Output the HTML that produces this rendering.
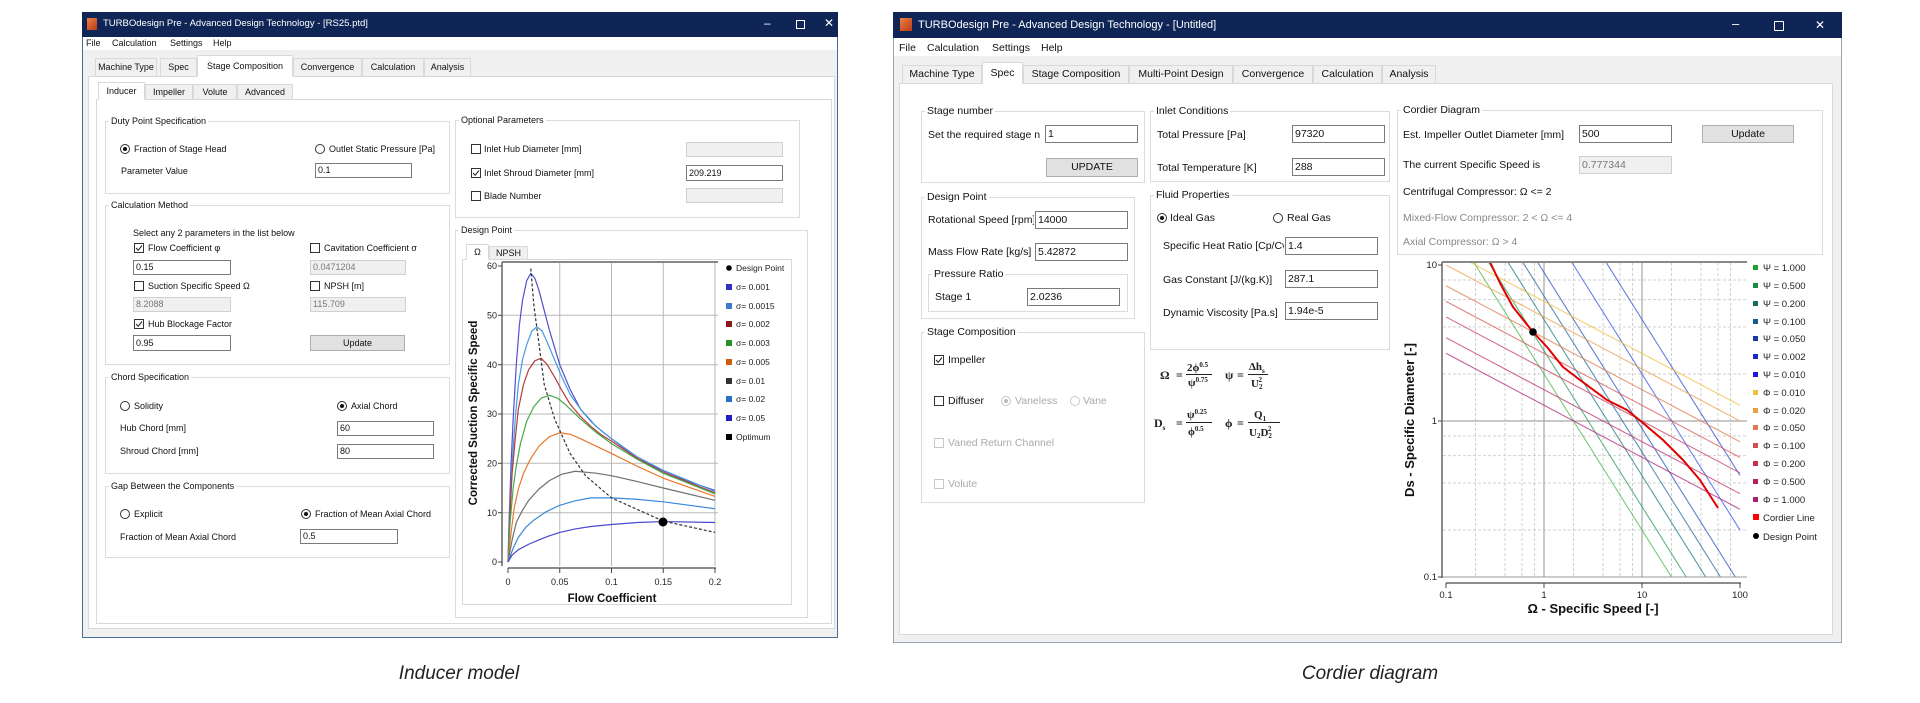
<!DOCTYPE html>
<html><head><meta charset="utf-8">
<style>
*{margin:0;padding:0}
body{width:1920px;height:703px;background:#fff;position:relative;overflow:hidden;font-family:"Liberation Sans",sans-serif}
.a{position:absolute}
.t{position:absolute;white-space:nowrap;line-height:12px;height:12px}
.L{font-size:9px;color:#111}
.R{font-size:10.5px;color:#111}
.in{position:absolute;background:#fff;border:1px solid #7a7a7a;box-sizing:border-box;padding-left:2px;white-space:nowrap;overflow:hidden}
.dis{background:#f0f0f0;border-color:#d0d0d0;color:#777}
.btn{position:absolute;background:#e1e1e1;border:1px solid #adadad;box-sizing:border-box;text-align:center;white-space:nowrap}
.gb{position:absolute;border:1px solid #dcdcdc;box-sizing:border-box}
.gt{position:absolute;background:#fff;padding:0 2px;white-space:nowrap;line-height:12px}
.cb{position:absolute;width:10px;height:10px;border:1px solid #333;box-sizing:border-box;background:#fff}
.cb.g{border-color:#c8c8c8}
.rb{position:absolute;width:10px;height:10px;border:1px solid #333;border-radius:50%;box-sizing:border-box;background:#fff}
.rb.on::after{content:"";position:absolute;left:2px;top:2px;width:4px;height:4px;border-radius:50%;background:#111}
.rb.g{border-color:#c8c8c8}.rb.g.on::after{background:#bbb}
.tab{position:absolute;background:#f0f0f0;border:1px solid #d9d9d9;box-sizing:border-box;text-align:center;white-space:nowrap}
.tab.s{background:#fff;border-bottom-color:#fff;z-index:2}
.title{position:absolute;background:#0e2556;color:#fff;white-space:nowrap}
.gray{color:#8a8a8a}
</style></head><body>

<!-- ================= LEFT WINDOW ================= -->
<div class="a" style="left:82px;top:12px;width:756px;height:626px;background:#f0f0f0;border:1px solid #4a6a9a;box-sizing:border-box"></div>
<div class="title" style="left:82px;top:12px;width:756px;height:25px"></div>
<div class="a" style="left:87px;top:18px;width:10px;height:12px;background:linear-gradient(135deg,#f08040,#b83a18)"></div>
<div class="t" style="left:103px;top:18px;color:#fff;font-size:9.5px">TURBOdesign Pre - Advanced Design Technology - [RS25.ptd]</div>
<div class="t" style="left:764px;top:17px;color:#fff;font-size:12px">&#8211;</div>
<div class="a" style="left:796px;top:20px;width:7px;height:7px;border:1px solid #fff"></div>
<div class="t" style="left:824px;top:17px;color:#fff;font-size:12px">&#10005;</div>
<div class="a" style="left:83px;top:37px;width:754px;height:13px;background:#fff"></div>
<div class="t L" style="left:86px;top:37px">File</div>
<div class="t L" style="left:112px;top:37px">Calculation</div>
<div class="t L" style="left:170px;top:37px">Settings</div>
<div class="t L" style="left:213px;top:37px">Help</div>
<!-- tabs -->
<div class="a" style="left:88px;top:76px;width:747px;height:553px;background:#fff;border:1px solid #d9d9d9;box-sizing:border-box"></div>
<div class="tab L" style="left:95px;top:58px;width:62px;height:19px;line-height:17px">Machine Type</div>
<div class="tab L" style="left:160px;top:58px;width:37px;height:19px;line-height:17px">Spec</div>
<div class="tab L s" style="left:197px;top:55px;width:96px;height:22px;line-height:20px">Stage Composition</div>
<div class="tab L" style="left:293px;top:58px;width:69px;height:19px;line-height:17px">Convergence</div>
<div class="tab L" style="left:362px;top:58px;width:62px;height:19px;line-height:17px">Calculation</div>
<div class="tab L" style="left:424px;top:58px;width:47px;height:19px;line-height:17px">Analysis</div>
<!-- subtabs -->
<div class="a" style="left:96px;top:99px;width:736px;height:525px;background:#fff;border:1px solid #d9d9d9;box-sizing:border-box"></div>
<div class="tab L s" style="left:98px;top:82px;width:47px;height:18px;line-height:17px">Inducer</div>
<div class="tab L" style="left:145px;top:84px;width:48px;height:16px;line-height:15px">Impeller</div>
<div class="tab L" style="left:193px;top:84px;width:44px;height:16px;line-height:15px">Volute</div>
<div class="tab L" style="left:237px;top:84px;width:56px;height:16px;line-height:15px">Advanced</div>

<!-- Duty Point -->
<div class="gb" style="left:105px;top:121px;width:345px;height:73px"></div>
<div class="gt L" style="left:109px;top:115px">Duty Point Specification</div>
<div class="rb on" style="left:120px;top:144px"></div><div class="t L" style="left:134px;top:143px">Fraction of Stage Head</div>
<div class="rb" style="left:315px;top:144px"></div><div class="t L" style="left:329px;top:143px">Outlet Static Pressure [Pa]</div>
<div class="t L" style="left:121px;top:165px">Parameter Value</div>
<div class="in L" style="left:315px;top:163px;width:97px;height:15px;line-height:13px">0.1</div>

<!-- Calculation Method -->
<div class="gb" style="left:105px;top:205px;width:345px;height:160px"></div>
<div class="gt L" style="left:109px;top:199px">Calculation Method</div>
<div class="t L" style="left:133px;top:227px">Select any 2 parameters in the list below</div>
<div class="cb" style="left:134px;top:243px"><svg width="8" height="8" style="position:absolute;left:0;top:0"><path d="M1 4 L3.2 6.2 L7 1.5" stroke="#222" stroke-width="1" fill="none"/></svg></div>
<div class="t L" style="left:148px;top:242px">Flow Coefficient &#966;</div>
<div class="cb" style="left:310px;top:243px"></div><div class="t L" style="left:324px;top:242px">Cavitation Coefficient &#963;</div>
<div class="in L" style="left:133px;top:260px;width:98px;height:15px;line-height:13px">0.15</div>
<div class="in L dis" style="left:310px;top:260px;width:96px;height:15px;line-height:13px">0.0471204</div>
<div class="cb" style="left:134px;top:281px"></div><div class="t L" style="left:148px;top:280px">Suction Specific Speed &#937;</div>
<div class="cb" style="left:310px;top:281px"></div><div class="t L" style="left:324px;top:280px">NPSH [m]</div>
<div class="in L dis" style="left:133px;top:297px;width:98px;height:15px;line-height:13px">8.2088</div>
<div class="in L dis" style="left:310px;top:297px;width:96px;height:15px;line-height:13px">115.709</div>
<div class="cb" style="left:134px;top:319px"><svg width="8" height="8" style="position:absolute;left:0;top:0"><path d="M1 4 L3.2 6.2 L7 1.5" stroke="#222" stroke-width="1" fill="none"/></svg></div>
<div class="t L" style="left:148px;top:318px">Hub Blockage Factor</div>
<div class="in L" style="left:133px;top:335px;width:98px;height:16px;line-height:14px">0.95</div>
<div class="btn L" style="left:310px;top:335px;width:95px;height:16px;line-height:14px">Update</div>

<!-- Chord -->
<div class="gb" style="left:105px;top:377px;width:345px;height:97px"></div>
<div class="gt L" style="left:109px;top:371px">Chord Specification</div>
<div class="rb" style="left:120px;top:401px"></div><div class="t L" style="left:134px;top:400px">Solidity</div>
<div class="rb on" style="left:337px;top:401px"></div><div class="t L" style="left:351px;top:400px">Axial Chord</div>
<div class="t L" style="left:120px;top:422px">Hub Chord [mm]</div>
<div class="in L" style="left:337px;top:421px;width:97px;height:15px;line-height:13px">60</div>
<div class="t L" style="left:120px;top:445px">Shroud Chord [mm]</div>
<div class="in L" style="left:337px;top:444px;width:97px;height:15px;line-height:13px">80</div>

<!-- Gap -->
<div class="gb" style="left:105px;top:486px;width:345px;height:72px"></div>
<div class="gt L" style="left:109px;top:480px">Gap Between the Components</div>
<div class="rb" style="left:120px;top:509px"></div><div class="t L" style="left:134px;top:508px">Explicit</div>
<div class="rb on" style="left:301px;top:509px"></div><div class="t L" style="left:315px;top:508px">Fraction of Mean Axial Chord</div>
<div class="t L" style="left:120px;top:531px">Fraction of Mean Axial Chord</div>
<div class="in L" style="left:300px;top:529px;width:98px;height:15px;line-height:13px">0.5</div>

<!-- Optional Parameters -->
<div class="gb" style="left:455px;top:120px;width:345px;height:98px"></div>
<div class="gt L" style="left:459px;top:114px">Optional Parameters</div>
<div class="cb" style="left:471px;top:144px"></div><div class="t L" style="left:484px;top:143px">Inlet Hub Diameter [mm]</div>
<div class="in L dis" style="left:686px;top:142px;width:97px;height:15px"></div>
<div class="cb" style="left:471px;top:168px"><svg width="8" height="8" style="position:absolute;left:0;top:0"><path d="M1 4 L3.2 6.2 L7 1.5" stroke="#222" stroke-width="1" fill="none"/></svg></div>
<div class="t L" style="left:484px;top:167px">Inlet Shroud Diameter [mm]</div>
<div class="in L" style="left:686px;top:165px;width:97px;height:16px;line-height:14px">209.219</div>
<div class="cb" style="left:471px;top:191px"></div><div class="t L" style="left:484px;top:190px">Blade Number</div>
<div class="in L dis" style="left:686px;top:188px;width:97px;height:15px"></div>

<!-- Design Point chart -->
<div class="gb" style="left:455px;top:230px;width:353px;height:388px"></div>
<div class="gt L" style="left:459px;top:224px">Design Point</div>
<div class="a" style="left:462px;top:259px;width:330px;height:346px;border:1px solid #d9d9d9;box-sizing:border-box;background:#fff"></div>
<div class="tab L s" style="left:466px;top:244px;width:23px;height:16px;line-height:15px">&#937;</div>
<div class="tab L" style="left:489px;top:246px;width:39px;height:14px;line-height:13px">NPSH</div>

<svg class="a" style="left:0;top:0" width="1920" height="703" viewBox="0 0 1920 703">
 <g stroke="#b8b8b8" stroke-width="1">
  <line x1="559.75" y1="262" x2="559.75" y2="566"/><line x1="611.5" y1="262" x2="611.5" y2="566"/>
  <line x1="663.25" y1="262" x2="663.25" y2="566"/><line x1="715" y1="262" x2="715" y2="566"/>
  <line x1="502" y1="512.7" x2="718" y2="512.7"/><line x1="502" y1="463.3" x2="718" y2="463.3"/>
  <line x1="502" y1="414" x2="718" y2="414"/><line x1="502" y1="364.7" x2="718" y2="364.7"/>
  <line x1="502" y1="315.3" x2="718" y2="315.3"/>
 </g>
 <line x1="502" y1="262" x2="718" y2="262" stroke="#888" stroke-width="2"/>
 <line x1="502" y1="262" x2="502" y2="566" stroke="#666" stroke-width="1.5"/>
 <line x1="508" y1="568" x2="716" y2="568" stroke="#666" stroke-width="1.5"/>
 <g stroke="#444" stroke-width="1">
  <line x1="498" y1="266" x2="502" y2="266"/><line x1="498" y1="315.3" x2="502" y2="315.3"/><line x1="498" y1="364.7" x2="502" y2="364.7"/><line x1="498" y1="414" x2="502" y2="414"/><line x1="498" y1="463.3" x2="502" y2="463.3"/><line x1="498" y1="512.7" x2="502" y2="512.7"/><line x1="498" y1="562" x2="502" y2="562"/>
  <line x1="508" y1="568" x2="508" y2="573"/><line x1="559.75" y1="568" x2="559.75" y2="573"/><line x1="611.5" y1="568" x2="611.5" y2="573"/><line x1="663.25" y1="568" x2="663.25" y2="573"/><line x1="715" y1="568" x2="715" y2="573"/>
 </g>
 <g transform="translate(508,562) scale(1035,-4.933)" fill="none" stroke-width="1.2" stroke-linejoin="round">
  <polyline vector-effect="non-scaling-stroke" stroke="#5050d0" points="0,0 0.001,8 0.003,20 0.005,29 0.008,40 0.011,48 0.014,53 0.018,57 0.022,58.5 0.026,57.5 0.03,55 0.035,51 0.04,47 0.05,40 0.06,35 0.07,31 0.085,27.5 0.1,25 0.125,21 0.15,18.5 0.175,16.3 0.2,14.5"/>
  <polyline vector-effect="non-scaling-stroke" stroke="#4a9ae0" points="0,0 0.002,11 0.004,20 0.007,29 0.01,36 0.014,41 0.018,44 0.023,46.8 0.028,47.7 0.033,46.8 0.038,44.5 0.045,41 0.052,37.5 0.06,34 0.07,31 0.08,28.5 0.09,26.6 0.1,25 0.125,21.3 0.15,18.6 0.2,14.3"/>
  <polyline vector-effect="non-scaling-stroke" stroke="#b83a3a" points="0,0 0.002,10 0.004,18 0.007,25 0.01,31 0.015,36 0.02,39 0.026,40.8 0.032,41.3 0.038,40 0.045,37.5 0.052,34.8 0.06,32 0.07,29.5 0.08,27.5 0.09,25.8 0.1,24.5 0.125,21 0.15,18.2 0.2,14"/>
  <polyline vector-effect="non-scaling-stroke" stroke="#48a848" points="0,0 0.002,8 0.005,15 0.008,19.5 0.012,24 0.018,28.5 0.025,31.5 0.032,33.2 0.04,33.8 0.048,33.2 0.055,32 0.07,29 0.085,26.3 0.1,24 0.125,20.8 0.15,18 0.2,13.8"/>
  <polyline vector-effect="non-scaling-stroke" stroke="#e8782a" points="0,0 0.003,6 0.006,11 0.01,14.8 0.015,18 0.022,21 0.03,23.5 0.04,25.4 0.05,26.2 0.06,25.9 0.07,25 0.085,23.5 0.1,22 0.125,19.4 0.15,17 0.2,13.3"/>
  <polyline vector-effect="non-scaling-stroke" stroke="#707070" points="0,0 0.004,4.5 0.008,8 0.014,10.5 0.02,12.5 0.03,14.8 0.04,16.5 0.052,17.8 0.065,18.4 0.085,18 0.1,17.5 0.125,16.3 0.15,15 0.2,12.5"/>
  <polyline vector-effect="non-scaling-stroke" stroke="#3a88d8" points="0,0 0.005,2.8 0.01,5 0.017,7 0.025,8.5 0.037,10.2 0.05,11.5 0.065,12.4 0.08,13 0.1,13 0.125,12.7 0.15,12.2 0.2,10.8"/>
  <polyline vector-effect="non-scaling-stroke" stroke="#4848cc" points="0,0 0.004,1.4 0.01,2.5 0.02,3.6 0.03,4.5 0.04,5.3 0.05,6 0.065,6.7 0.08,7.2 0.1,7.6 0.125,8 0.15,8.2 0.2,8"/>
 </g>
 <polyline fill="none" stroke="#333" stroke-width="1.2" stroke-dasharray="3,2" points="530.8,268.5 533.9,305.5 539.1,344.9 544.2,384.4 554.6,418.9 570.1,453.5 585.6,475.7 611.5,497.9 663.3,521.1 715,532.4"/>
 <circle cx="663" cy="522" r="4.5" fill="#000"/>
 <g font-family="Liberation Sans" font-size="9" fill="#222" text-anchor="end">
  <text x="497" y="269">60</text><text x="497" y="318.5">50</text><text x="497" y="368">40</text><text x="497" y="417">30</text><text x="497" y="466.5">20</text><text x="497" y="516">10</text><text x="497" y="565">0</text>
 </g>
 <g font-family="Liberation Sans" font-size="9" fill="#222" text-anchor="middle">
  <text x="508" y="585">0</text><text x="559.75" y="585">0.05</text><text x="611.5" y="585">0.1</text><text x="663.25" y="585">0.15</text><text x="715" y="585">0.2</text>
 </g>
 <text x="612" y="602" font-family="Liberation Sans" font-size="11.5" font-weight="bold" fill="#111" text-anchor="middle">Flow Coefficient</text>
 <text transform="translate(477,413) rotate(-90)" font-family="Liberation Sans" font-size="11.5" font-weight="bold" fill="#111" text-anchor="middle">Corrected Suction Specific Speed</text>
 <g font-family="Liberation Sans" font-size="8.5" fill="#222">
  <circle cx="729" cy="268" r="2.8" fill="#000"/><text x="736" y="271">Design Point</text>
  <rect x="726" y="284" width="6" height="6" fill="#3030c0"/><text x="736" y="290">&#963;= 0.001</text>
  <rect x="726" y="303" width="6" height="6" fill="#3a7ad0"/><text x="736" y="309">&#963;= 0.0015</text>
  <rect x="726" y="321" width="6" height="6" fill="#8a1a1a"/><text x="736" y="327">&#963;= 0.002</text>
  <rect x="726" y="340" width="6" height="6" fill="#2a902a"/><text x="736" y="346">&#963;= 0.003</text>
  <rect x="726" y="359" width="6" height="6" fill="#d05a10"/><text x="736" y="365">&#963;= 0.005</text>
  <rect x="726" y="378" width="6" height="6" fill="#333"/><text x="736" y="384">&#963;= 0.01</text>
  <rect x="726" y="396" width="6" height="6" fill="#2a70c8"/><text x="736" y="402">&#963;= 0.02</text>
  <rect x="726" y="415" width="6" height="6" fill="#2020c0"/><text x="736" y="421">&#963;= 0.05</text>
  <rect x="726" y="434" width="6" height="6" fill="#000"/><text x="736" y="440">Optimum</text>
 </g>
</svg>

<!-- ================= RIGHT WINDOW ================= -->
<div class="a" style="left:893px;top:12px;width:949px;height:631px;background:#f0f0f0;border:1px solid #9aa6b8;box-sizing:border-box"></div>
<div class="title" style="left:893px;top:12px;width:949px;height:26px"></div>
<div class="a" style="left:900px;top:18px;width:12px;height:13px;background:linear-gradient(135deg,#f08040,#b83a18)"></div>
<div class="t" style="left:918px;top:19px;color:#fff;font-size:11px">TURBOdesign Pre - Advanced Design Technology - [Untitled]</div>
<div class="t" style="left:1732px;top:18px;color:#fff;font-size:13px">&#8211;</div>
<div class="a" style="left:1774px;top:21px;width:8px;height:8px;border:1.5px solid #fff;border-radius:1px"></div>
<div class="t" style="left:1815px;top:19px;color:#fff;font-size:12px">&#10005;</div>
<div class="a" style="left:894px;top:38px;width:947px;height:18px;background:#fff"></div>
<div class="t R" style="left:899px;top:42px">File</div>
<div class="t R" style="left:927px;top:42px">Calculation</div>
<div class="t R" style="left:992px;top:42px">Settings</div>
<div class="t R" style="left:1041px;top:42px">Help</div>
<div class="a" style="left:899px;top:83px;width:934px;height:552px;background:#fff;border:1px solid #d9d9d9;box-sizing:border-box"></div>
<div class="tab R" style="left:902px;top:65px;width:80px;height:19px;line-height:17px">Machine Type</div>
<div class="tab R s" style="left:982px;top:62px;width:41px;height:22px;line-height:20px">Spec</div>
<div class="tab R" style="left:1023px;top:65px;width:106px;height:19px;line-height:17px">Stage Composition</div>
<div class="tab R" style="left:1129px;top:65px;width:104px;height:19px;line-height:17px">Multi-Point Design</div>
<div class="tab R" style="left:1233px;top:65px;width:80px;height:19px;line-height:17px">Convergence</div>
<div class="tab R" style="left:1313px;top:65px;width:69px;height:19px;line-height:17px">Calculation</div>
<div class="tab R" style="left:1382px;top:65px;width:54px;height:19px;line-height:17px">Analysis</div>

<!-- Stage number -->
<div class="gb" style="left:921px;top:111px;width:224px;height:72px"></div>
<div class="gt R" style="left:925px;top:105px">Stage number</div>
<div class="t R" style="left:928px;top:129px;width:116px;overflow:hidden">Set the required stage n</div>
<div class="in R" style="left:1045px;top:125px;width:93px;height:18px;line-height:16px">1</div>
<div class="btn R" style="left:1046px;top:158px;width:92px;height:19px;line-height:17px">UPDATE</div>

<!-- Design Point -->
<div class="gb" style="left:921px;top:197px;width:214px;height:122px"></div>
<div class="gt R" style="left:925px;top:191px">Design Point</div>
<div class="t R" style="left:928px;top:214px;width:106px;overflow:hidden">Rotational Speed [rpm]</div>
<div class="in R" style="left:1035px;top:211px;width:93px;height:18px;line-height:16px">14000</div>
<div class="t R" style="left:928px;top:246px">Mass Flow Rate [kg/s]</div>
<div class="in R" style="left:1035px;top:243px;width:93px;height:18px;line-height:16px">5.42872</div>
<div class="gb" style="left:928px;top:274px;width:200px;height:38px"></div>
<div class="gt R" style="left:932px;top:268px">Pressure Ratio</div>
<div class="t R" style="left:935px;top:291px">Stage 1</div>
<div class="in R" style="left:1027px;top:288px;width:93px;height:18px;line-height:16px">2.0236</div>

<!-- Stage Composition -->
<div class="gb" style="left:921px;top:332px;width:224px;height:171px"></div>
<div class="gt R" style="left:925px;top:326px">Stage Composition</div>
<div class="cb" style="left:934px;top:355px"><svg width="8" height="8" style="position:absolute;left:0;top:0"><path d="M1 4 L3.2 6.2 L7 1.5" stroke="#222" stroke-width="1" fill="none"/></svg></div>
<div class="t R" style="left:948px;top:354px">Impeller</div>
<div class="cb" style="left:934px;top:396px"></div><div class="t R" style="left:948px;top:395px">Diffuser</div>
<div class="rb g on" style="left:1001px;top:396px"></div><div class="t R gray" style="left:1015px;top:395px;color:#aaa">Vaneless</div>
<div class="rb g" style="left:1070px;top:396px"></div><div class="t R" style="left:1083px;top:395px;color:#aaa">Vane</div>
<div class="cb g" style="left:934px;top:438px"></div><div class="t R" style="left:948px;top:437px;color:#aaa">Vaned Return Channel</div>
<div class="cb g" style="left:934px;top:479px"></div><div class="t R" style="left:948px;top:478px;color:#aaa">Volute</div>

<!-- Inlet Conditions -->
<div class="gb" style="left:1150px;top:111px;width:240px;height:71px"></div>
<div class="gt R" style="left:1154px;top:105px">Inlet Conditions</div>
<div class="t R" style="left:1157px;top:129px">Total Pressure [Pa]</div>
<div class="in R" style="left:1292px;top:125px;width:93px;height:18px;line-height:16px">97320</div>
<div class="t R" style="left:1157px;top:162px">Total Temperature [K]</div>
<div class="in R" style="left:1292px;top:158px;width:93px;height:18px;line-height:16px">288</div>

<!-- Fluid Properties -->
<div class="gb" style="left:1150px;top:195px;width:240px;height:155px"></div>
<div class="gt R" style="left:1154px;top:189px">Fluid Properties</div>
<div class="rb on" style="left:1157px;top:213px"></div><div class="t R" style="left:1170px;top:212px">Ideal Gas</div>
<div class="rb" style="left:1273px;top:213px"></div><div class="t R" style="left:1287px;top:212px">Real Gas</div>
<div class="t R" style="left:1163px;top:240px;width:121px;overflow:hidden">Specific Heat Ratio [Cp/Cv]</div>
<div class="in R" style="left:1285px;top:237px;width:93px;height:18px;line-height:16px">1.4</div>
<div class="t R" style="left:1163px;top:274px">Gas Constant [J/(kg.K)]</div>
<div class="in R" style="left:1285px;top:270px;width:93px;height:18px;line-height:16px">287.1</div>
<div class="t R" style="left:1163px;top:307px">Dynamic Viscosity [Pa.s]</div>
<div class="in R" style="left:1285px;top:302px;width:93px;height:18px;line-height:16px">1.94e-5</div>

<!-- Formulas -->
<svg class="a" style="left:1150px;top:355px" width="140" height="90" viewBox="0 0 140 90" font-family="Liberation Serif" font-weight="bold" fill="#222">
 <text x="10" y="24" font-size="12">&#937;</text><text x="26" y="24" font-size="12">=</text>
 <text x="37" y="16" font-size="11">2&#981;<tspan font-size="7" dy="-4">0.5</tspan></text>
 <line x1="36" y1="19.5" x2="62" y2="19.5" stroke="#222"/>
 <text x="38" y="31" font-size="11">&#968;<tspan font-size="7" dy="-4">0.75</tspan></text>
 <text x="75" y="24" font-size="12">&#968;</text><text x="87" y="24" font-size="12">=</text>
 <text x="99" y="15" font-size="11">&#916;h<tspan font-size="7" dy="3">s</tspan></text>
 <line x1="98" y1="19.5" x2="118" y2="19.5" stroke="#222"/>
 <text x="101" y="32" font-size="11">U<tspan font-size="7" dy="2">2</tspan><tspan font-size="7" dx="-4" dy="-7">2</tspan></text>
 <text x="4" y="72" font-size="12">D<tspan font-size="7" dy="3">s</tspan></text><text x="26" y="72" font-size="12">=</text>
 <text x="37" y="63" font-size="11">&#968;<tspan font-size="7" dy="-4">0.25</tspan></text>
 <line x1="36" y1="67.5" x2="62" y2="67.5" stroke="#222"/>
 <text x="38" y="80" font-size="11">&#981;<tspan font-size="7" dy="-4">0.5</tspan></text>
 <text x="75" y="72" font-size="12">&#981;</text><text x="87" y="72" font-size="12">=</text>
 <text x="104" y="63" font-size="11">Q<tspan font-size="7" dy="3">1</tspan></text>
 <line x1="98" y1="67.5" x2="130" y2="67.5" stroke="#222"/>
 <text x="99" y="81" font-size="11">U<tspan font-size="7" dy="2">2</tspan><tspan dy="-2">D</tspan><tspan font-size="7" dy="2">2</tspan><tspan font-size="7" dx="-4" dy="-7">2</tspan></text>
</svg>

<!-- Cordier -->
<div class="gb" style="left:1397px;top:110px;width:426px;height:145px"></div>
<div class="gt R" style="left:1401px;top:104px">Cordier Diagram</div>
<div class="t R" style="left:1403px;top:129px">Est. Impeller Outlet Diameter [mm]</div>
<div class="in R" style="left:1579px;top:125px;width:93px;height:18px;line-height:16px">500</div>
<div class="btn R" style="left:1702px;top:125px;width:92px;height:18px;line-height:16px">Update</div>
<div class="t R" style="left:1403px;top:159px">The current Specific Speed is</div>
<div class="in R dis" style="left:1579px;top:156px;width:93px;height:18px;line-height:16px">0.777344</div>
<div class="t R" style="left:1403px;top:186px">Centrifugal Compressor: &#937; &lt;= 2</div>
<div class="t R" style="left:1403px;top:212px;color:#888">Mixed-Flow Compressor: 2 &lt; &#937; &lt;= 4</div>
<div class="t R" style="left:1403px;top:236px;color:#888">Axial Compressor: &#937; &gt; 4</div>

<svg class="a" style="left:0;top:0" width="1920" height="703" viewBox="0 0 1920 703">
 <defs><clipPath id="cp"><rect x="1443" y="263" width="304" height="314"/></clipPath></defs>
 <g stroke="#d0d0d0" stroke-width="1" stroke-dasharray="3,2">
  <line x1="1475.5" y1="263" x2="1475.5" y2="577"/><line x1="1505" y1="263" x2="1505" y2="577"/><line x1="1522" y1="263" x2="1522" y2="577"/><line x1="1534.5" y1="263" x2="1534.5" y2="577"/>
  <line x1="1573.5" y1="263" x2="1573.5" y2="577"/><line x1="1603" y1="263" x2="1603" y2="577"/><line x1="1620" y1="263" x2="1620" y2="577"/><line x1="1632.5" y1="263" x2="1632.5" y2="577"/>
  <line x1="1671.5" y1="263" x2="1671.5" y2="577"/><line x1="1701" y1="263" x2="1701" y2="577"/><line x1="1718" y1="263" x2="1718" y2="577"/><line x1="1730.5" y1="263" x2="1730.5" y2="577"/>
  <line x1="1443" y1="280" x2="1747" y2="280"/><line x1="1443" y1="299.6" x2="1747" y2="299.6"/><line x1="1443" y1="327" x2="1747" y2="327"/><line x1="1443" y1="374" x2="1747" y2="374"/>
  <line x1="1443" y1="436" x2="1747" y2="436"/><line x1="1443" y1="455.6" x2="1747" y2="455.6"/><line x1="1443" y1="483" x2="1747" y2="483"/><line x1="1443" y1="530" x2="1747" y2="530"/>
 </g>
 <g stroke="#a8a8a8" stroke-width="1.2">
  <line x1="1544" y1="263" x2="1544" y2="577"/><line x1="1642" y1="263" x2="1642" y2="577"/><line x1="1443" y1="421" x2="1747" y2="421"/>
 </g>
 <g clip-path="url(#cp)">
 <g transform="translate(1544,421) scale(98,-156)" fill="none" stroke-width="1.1" stroke-opacity="0.75">
  <line vector-effect="non-scaling-stroke" stroke="#4cb84c" x1="-1" y1="1.301" x2="2" y2="-1.699"/>
  <line vector-effect="non-scaling-stroke" stroke="#2e9a5a" x1="-1" y1="1.451" x2="2" y2="-1.549"/>
  <line vector-effect="non-scaling-stroke" stroke="#207a7a" x1="-1" y1="1.650" x2="2" y2="-1.350"/>
  <line vector-effect="non-scaling-stroke" stroke="#2a6aa0" x1="-1" y1="1.801" x2="2" y2="-1.199"/>
  <line vector-effect="non-scaling-stroke" stroke="#2a58b8" x1="-1" y1="1.952" x2="2" y2="-1.048"/>
  <line vector-effect="non-scaling-stroke" stroke="#3050d0" x1="-1" y1="2.651" x2="2" y2="-0.349"/>
  <line vector-effect="non-scaling-stroke" stroke="#3858e0" x1="-1" y1="2.301" x2="2" y2="-0.699"/>
  <line vector-effect="non-scaling-stroke" stroke="#f0c040" x1="-1" y1="1.100" x2="2" y2="0.100"/>
  <line vector-effect="non-scaling-stroke" stroke="#eea050" x1="-1" y1="1.000" x2="2" y2="0.000"/>
  <line vector-effect="non-scaling-stroke" stroke="#e07a50" x1="-1" y1="0.867" x2="2" y2="-0.133"/>
  <line vector-effect="non-scaling-stroke" stroke="#d85858" x1="-1" y1="0.767" x2="2" y2="-0.233"/>
  <line vector-effect="non-scaling-stroke" stroke="#c83c60" x1="-1" y1="0.667" x2="2" y2="-0.333"/>
  <line vector-effect="non-scaling-stroke" stroke="#c03070" x1="-1" y1="0.534" x2="2" y2="-0.466"/>
  <line vector-effect="non-scaling-stroke" stroke="#b02a80" x1="-1" y1="0.434" x2="2" y2="-0.566"/>
 </g>
 </g>
 <polyline fill="none" stroke="#e00000" stroke-width="2" stroke-linejoin="round" points="1490,262 1500,283 1513,307 1533,332 1547,347 1563,367 1580,380 1607,400 1627,410 1643,423 1663,440 1683,460 1700,480 1718,508"/>
 <circle cx="1533" cy="332" r="3.8" fill="#000"/>
 <line x1="1442" y1="262" x2="1747" y2="262" stroke="#888" stroke-width="2"/>
 <line x1="1442" y1="577" x2="1747" y2="577" stroke="#999" stroke-width="1"/>
 <line x1="1442" y1="262" x2="1442" y2="578" stroke="#666" stroke-width="1.5"/>
 <line x1="1446" y1="583" x2="1741" y2="583" stroke="#666" stroke-width="1.5"/>
 <g stroke="#444"><line x1="1438" y1="265" x2="1442" y2="265"/><line x1="1438" y1="421" x2="1442" y2="421"/><line x1="1438" y1="577" x2="1442" y2="577"/>
  <line x1="1446" y1="583" x2="1446" y2="588"/><line x1="1544" y1="583" x2="1544" y2="588"/><line x1="1642" y1="583" x2="1642" y2="588"/><line x1="1740" y1="583" x2="1740" y2="588"/></g>
 <g font-family="Liberation Sans" font-size="9.5" fill="#222" text-anchor="end">
  <text x="1437" y="268">10</text><text x="1437" y="424">1</text><text x="1437" y="580">0.1</text>
 </g>
 <g font-family="Liberation Sans" font-size="9.5" fill="#222" text-anchor="middle">
  <text x="1446" y="598">0.1</text><text x="1544" y="598">1</text><text x="1642" y="598">10</text><text x="1740" y="598">100</text>
 </g>
 <text x="1593" y="613" font-family="Liberation Sans" font-size="13" font-weight="bold" fill="#111" text-anchor="middle">&#937; - Specific Speed [-]</text>
 <text transform="translate(1414,420) rotate(-90)" font-family="Liberation Sans" font-size="13" font-weight="bold" fill="#111" text-anchor="middle">Ds - Specific Diameter [-]</text>
 <g font-family="Liberation Sans" font-size="9.5" fill="#222">
  <rect x="1753" y="265" width="5" height="5" fill="#20a030"/><text x="1763" y="271">&#936; = 1.000</text>
  <rect x="1753" y="283" width="5" height="5" fill="#1a8a40"/><text x="1763" y="289">&#936; = 0.500</text>
  <rect x="1753" y="301" width="5" height="5" fill="#1a6a60"/><text x="1763" y="307">&#936; = 0.200</text>
  <rect x="1753" y="319" width="5" height="5" fill="#1a5a8a"/><text x="1763" y="325">&#936; = 0.100</text>
  <rect x="1753" y="336" width="5" height="5" fill="#1a3aa0"/><text x="1763" y="342">&#936; = 0.050</text>
  <rect x="1753" y="354" width="5" height="5" fill="#1a2ac0"/><text x="1763" y="360">&#936; = 0.002</text>
  <rect x="1753" y="372" width="5" height="5" fill="#1a1ae0"/><text x="1763" y="378">&#936; = 0.010</text>
  <rect x="1753" y="390" width="5" height="5" fill="#f0c040"/><text x="1763" y="396">&#934; = 0.010</text>
  <rect x="1753" y="408" width="5" height="5" fill="#e8a040"/><text x="1763" y="414">&#934; = 0.020</text>
  <rect x="1753" y="425" width="5" height="5" fill="#e07a50"/><text x="1763" y="431">&#934; = 0.050</text>
  <rect x="1753" y="443" width="5" height="5" fill="#d05050"/><text x="1763" y="449">&#934; = 0.100</text>
  <rect x="1753" y="461" width="5" height="5" fill="#c83050"/><text x="1763" y="467">&#934; = 0.200</text>
  <rect x="1753" y="479" width="5" height="5" fill="#b82060"/><text x="1763" y="485">&#934; = 0.500</text>
  <rect x="1753" y="497" width="5" height="5" fill="#a82070"/><text x="1763" y="503">&#934; = 1.000</text>
  <rect x="1753" y="514" width="6" height="6" fill="#ff0000"/><text x="1763" y="521">Cordier Line</text>
  <circle cx="1756" cy="536" r="3" fill="#000"/><text x="1763" y="540">Design Point</text>
 </g>
</svg>

<!-- captions -->
<div class="t" style="left:359px;top:662px;width:200px;height:24px;line-height:24px;text-align:center;font-size:19px;font-style:italic;color:#222">Inducer model</div>
<div class="t" style="left:1270px;top:662px;width:200px;height:24px;line-height:24px;text-align:center;font-size:19px;font-style:italic;color:#222">Cordier diagram</div>
</body></html>
